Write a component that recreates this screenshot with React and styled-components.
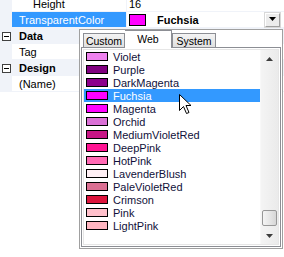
import React from "react";
import styled, { createGlobalStyle } from "styled-components";

const GlobalStyle = createGlobalStyle`
  html, body {
    margin: 0;
    padding: 0;
    background: #fff;
  }
  body {
    font-family: "Liberation Sans", Arial, sans-serif;
    font-size: 11px;
    color: #000;
  }
`;

const LINE = "#f0f3f9";

const COLORS = [
  ["Violet", "#ee82ee"],
  ["Purple", "#800080"],
  ["DarkMagenta", "#8b008b"],
  ["Fuchsia", "#ff00ff"],
  ["Magenta", "#ff00ff"],
  ["Orchid", "#da70d6"],
  ["MediumVioletRed", "#c71585"],
  ["DeepPink", "#ff1493"],
  ["HotPink", "#ff69b4"],
  ["LavenderBlush", "#fff0f5"],
  ["PaleVioletRed", "#db7093"],
  ["Crimson", "#dc143c"],
  ["Pink", "#ffc0cb"],
  ["LightPink", "#ffb6c1"],
];

const Screen = styled.div`
  position: relative;
  width: 284px;
  height: 257px;
  overflow: hidden;
  background: #fff;
`;

/* property grid */
const Grid = styled.div`
  display: flex;
  flex-direction: column;
  margin-top: -3px;
  font-size: 11px;
`;

const Row = styled.div`
  display: grid;
  grid-template-columns: 12px 115px 1fr;
  height: ${(p) => p.$h || 16}px;
`;

const Margin = styled.div`
  background: ${LINE};
`;

const NameCell = styled.div`
  display: flex;
  align-items: center;
  box-sizing: border-box;
  padding-left: ${(p) => p.$indent}px;
  background: ${(p) => (p.$selected ? "#3399ff" : "#fff")};
  color: ${(p) => (p.$selected ? "#fff" : "#000")};
  border-right: 1px solid ${LINE};
  border-bottom: 1px solid ${LINE};
  white-space: nowrap;
  overflow: hidden;
`;

const ValueCell = styled.div`
  display: flex;
  align-items: center;
  box-sizing: border-box;
  padding-left: 2px;
  border-bottom: 1px solid ${LINE};
  white-space: nowrap;
`;

const Swatch = styled.span`
  display: inline-block;
  box-sizing: border-box;
  width: ${(p) => p.$w}px;
  height: ${(p) => p.$h}px;
  border: 1px solid #000;
  background: ${(p) => p.$color};
  flex: none;
`;

const ValueText = styled.span`
  margin-left: 11px;
  font-weight: bold;
  font-size: 11px;
`;

const DropButton = styled.span`
  margin-left: auto;
  margin-right: 4px;
  box-sizing: border-box;
  width: 15px;
  height: 14px;
  border: 1px solid #a0a0a0;
  border-top-color: #fff;
  border-left-color: #fff;
  outline: 1px solid #d8d8d8;
  background: #ececec;
  display: flex;
  align-items: center;
  justify-content: center;
`;

const CategoryRow = styled.div`
  display: grid;
  grid-template-columns: 13px 1fr;
  height: 16px;
  background: ${LINE};
`;

const Toggle = styled.span`
  align-self: center;
  margin-left: 2px;
  position: relative;
  box-sizing: border-box;
  width: 9px;
  height: 9px;
  border: 1px solid #404040;
  background: #fff;
  &::after {
    content: "";
    position: absolute;
    left: 1px;
    top: 3px;
    width: 5px;
    height: 1px;
    background: #000;
  }
`;

const CategoryLabel = styled.span`
  display: flex;
  align-items: center;
  padding-left: 6px;
  font-weight: bold;
  font-size: 11px;
`;

/* dropdown editor */
const Popup = styled.div`
  position: absolute;
  left: 79px;
  top: 29px;
  width: 204px;
  height: 220px;
  box-sizing: border-box;
  border: 1px solid #a0a0a0;
  background: #fff;
  padding: 0 1px 1px;
  display: flex;
  flex-direction: column;
`;

const TabStrip = styled.div`
  display: flex;
  align-items: flex-end;
  height: 18px;
  padding-left: 2px;
  flex: none;
  position: relative;
  z-index: 1;
`;

const Tab = styled.div`
  box-sizing: border-box;
  width: ${(p) => p.$w}px;
  height: ${(p) => (p.$active ? 18 : 15)}px;
  border: 1px solid #8c8e94;
  border-left-width: ${(p) => (p.$active ? 0 : 1)}px;
  border-bottom: ${(p) => (p.$active ? "none" : "1px solid #8c8e94")};
  background: ${(p) =>
    p.$active ? "#fff" : "linear-gradient(#f3f3f3, #e0e0e0)"};
  display: flex;
  align-items: ${(p) => (p.$active ? "flex-start" : "center")};
  padding-top: ${(p) => (p.$active ? 2 : 0)}px;
  justify-content: center;
  font-size: 10.5px;
  white-space: nowrap;
`;

const TabPage = styled.div`
  flex: 1;
  box-sizing: border-box;
  border: 1px solid #8c8e94;
  margin-top: -1px;
  padding: 1px;
  display: flex;
`;

const ListBox = styled.div`
  flex: 1;
  box-sizing: border-box;
  border: 1px solid #e6e6e6;
  display: flex;
  background: #fff;
`;

const Items = styled.div`
  flex: 1;
  display: flex;
  flex-direction: column;
`;

const Item = styled.div`
  display: flex;
  align-items: center;
  height: 13px;
  padding-left: 2px;
  background: ${(p) => (p.$selected ? "#3399ff" : "transparent")};
  color: ${(p) => (p.$selected ? "#fff" : "#10103a")};
  font-size: 11px;
  white-space: nowrap;
`;

const ItemName = styled.span`
  margin-left: 5px;
`;

const ScrollBar = styled.div`
  width: 17px;
  flex: none;
  display: flex;
  flex-direction: column;
  background: linear-gradient(90deg, #f4f4f4, #ebebeb);
  border-left: 1px solid #f8f8f8;
`;

const Arrow = styled.div`
  height: 17px;
  display: flex;
  align-items: center;
  justify-content: center;
  flex: none;
`;

const Track = styled.div`
  flex: 1;
  display: flex;
  flex-direction: column;
  justify-content: flex-end;
  padding-bottom: 1px;
`;

const Thumb = styled.div`
  height: 16px;
  margin: 0 1px;
  box-sizing: border-box;
  border: 1px solid #979797;
  border-radius: 2px;
  background: linear-gradient(90deg, #f4f4f4, #e3e3e3 60%, #d6d6d6);
`;

const Cursor = styled.svg`
  position: absolute;
  left: 179px;
  top: 94px;
`;

const Tri = ({ down }) => (
  <svg width="7" height="4" viewBox="0 0 7 4">
    <path d={down ? "M0 0H7L3.5 4Z" : "M0 4H7L3.5 0Z"} fill="#3c3c3c" />
  </svg>
);

export default function App() {
  return (
    <Screen>
      <GlobalStyle />
      <Grid>
        <Row $h={15}>
          <Margin />
          <NameCell $indent={21}>Height</NameCell>
          <ValueCell>16</ValueCell>
        </Row>
        <Row>
          <Margin />
          <NameCell $indent={7} $selected>
            TransparentColor
          </NameCell>
          <ValueCell>
            <Swatch $w={17} $h={12} $color="#ff00ff" />
            <ValueText>Fuchsia</ValueText>
            <DropButton>
              <svg width="7" height="5" viewBox="0 0 7 5">
                <path d="M0 0H7L3.5 4Z" fill="#000" />
              </svg>
            </DropButton>
          </ValueCell>
        </Row>
        <CategoryRow>
          <Toggle />
          <CategoryLabel>Data</CategoryLabel>
        </CategoryRow>
        <Row>
          <Margin />
          <NameCell $indent={7}>Tag</NameCell>
          <ValueCell />
        </Row>
        <CategoryRow>
          <Toggle />
          <CategoryLabel>Design</CategoryLabel>
        </CategoryRow>
        <Row>
          <Margin />
          <NameCell $indent={7}>(Name)</NameCell>
          <ValueCell />
        </Row>
      </Grid>

      <Popup>
        <TabStrip>
          <Tab $w={42}>Custom</Tab>
          <Tab $w={47} $active>
            Web
          </Tab>
          <Tab $w={44}>System</Tab>
        </TabStrip>
        <TabPage>
          <ListBox>
            <Items>
              {COLORS.map(([name, color]) => (
                <Item key={name} $selected={name === "Fuchsia"}>
                  <Swatch $w={22} $h={9} $color={color} />
                  <ItemName>{name}</ItemName>
                </Item>
              ))}
            </Items>
            <ScrollBar>
              <Arrow>
                <Tri />
              </Arrow>
              <Track>
                <Thumb />
              </Track>
              <Arrow>
                <Tri down />
              </Arrow>
            </ScrollBar>
          </ListBox>
        </TabPage>
      </Popup>

      <Cursor width="13" height="21" viewBox="0 0 13 21">
        <path
          d="M0.5 0.5V16.5L4.5 12.5L7.5 19.5L10 18.5L7 11.5H12Z"
          fill="#fff"
          stroke="#000"
          strokeWidth="1"
          strokeLinejoin="miter"
        />
      </Cursor>
    </Screen>
  );
}
